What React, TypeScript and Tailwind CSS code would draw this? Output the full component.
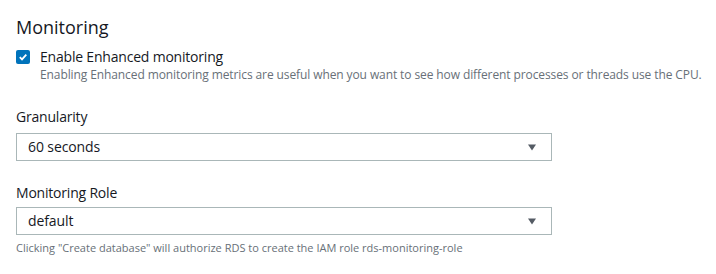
function Caret() {
  return (
    <svg width="10" height="7" viewBox="0 0 10 7" className="shrink-0">
      <path d="M1 0.5 L9 0.5 L5 6.5 Z" fill="#545b64" />
    </svg>
  );
}

function Select({ value }: { value: string }) {
  return (
    <div className="flex h-[28px] w-[536px] items-center justify-between border border-[#aab7b8] bg-white pl-[11px] pr-[14px]">
      <span className="text-[14px] leading-5 tracking-[-0.1px] text-[#16191f]">{value}</span>
      <Caret />
    </div>
  );
}

export default function App() {
  return (
    <div className="h-[274px] w-[716px] bg-white px-4 pt-4 font-['Open_Sans',sans-serif] text-[#16191f]">
      <h2 className="text-[18px] leading-[22px]">Monitoring</h2>

      <div className="mt-[9px] flex gap-[10px]">
        <span className="mt-[3px] grid h-[14px] w-[14px] shrink-0 place-items-center rounded-[2px] bg-[#0073bb]">
          <svg width="10" height="10" viewBox="0 0 10 10">
            <path d="M1.8 5.2 L4 7.4 L8.3 2.6" fill="none" stroke="white" strokeWidth="1.8" />
          </svg>
        </span>
        <div>
          <div className="text-[14px] leading-5 tracking-[-0.2px]">Enable Enhanced monitoring</div>
          <div className="whitespace-nowrap text-[12px] leading-4 tracking-[-0.1px] text-[#687078]">
            Enabling Enhanced monitoring metrics are useful when you want to see how different processes or threads use the CPU.
          </div>
        </div>
      </div>

      <div className="mt-6 text-[14px] leading-5 tracking-[-0.2px]">Granularity</div>
      <div className="mt-1.5">
        <Select value="60 seconds" />
      </div>

      <div className="mt-[22px] text-[14px] leading-5 tracking-[-0.2px]">Monitoring Role</div>
      <div className="mt-1">
        <Select value="default" />
      </div>
      <div className="mt-[5px] whitespace-nowrap text-[11px] leading-4 text-[#687078]">
        Clicking "Create database" will authorize RDS to create the IAM role rds-monitoring-role
      </div>
    </div>
  );
}
